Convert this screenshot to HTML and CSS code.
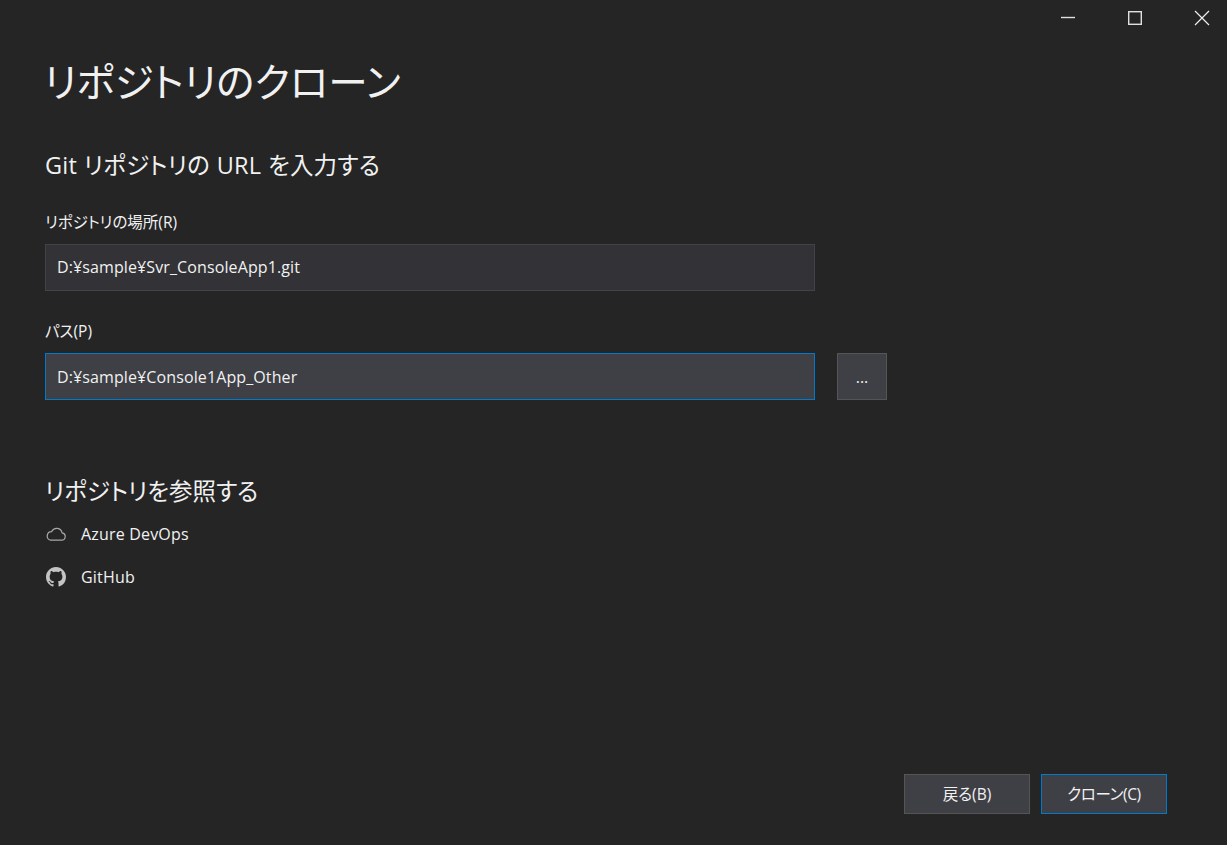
FILE: index.html
```html
<!DOCTYPE html>
<html lang="ja">
<head>
<meta charset="utf-8">
<title>リポジトリのクローン</title>
<link rel="stylesheet" href="styles.css">
</head>
<body>
<div class="window">
  <header class="caption">
    <button class="cap-btn" aria-label="最小化"><svg width="16" height="16" viewBox="0 0 16 16"><path d="M1 7.500h14" stroke="#e0e0e0" stroke-width="1.400" fill="none"/></svg></button>
    <button class="cap-btn" aria-label="最大化"><svg width="16" height="16" viewBox="0 0 16 16"><rect x="1.700" y="1.700" width="12.600" height="12.600" stroke="#e0e0e0" stroke-width="1.400" fill="none"/></svg></button>
    <button class="cap-btn" aria-label="閉じる"><svg width="16" height="16" viewBox="0 0 16 16"><path d="M1 1l14 14M15 1l-14 14" stroke="#f0f0f0" stroke-width="1.200" fill="none"/></svg></button>
  </header>
  <main class="content">
    <h1 class="title">リポジトリのクローン</h1>
    <h2 class="section first">Git リポジトリの URL を入力する</h2>
    <label class="label">リポジトリの場所(R)</label>
    <div class="row">
      <div class="input">D:¥sample¥Svr_ConsoleApp1.git</div>
    </div>
    <label class="label second">パス(P)</label>
    <div class="row">
      <div class="input focused">D:¥sample¥Console1App_Other</div>
      <button class="browse">...</button>
    </div>
    <h2 class="section browse-head">リポジトリを参照する</h2>
    <a class="link">
      <svg class="ico" width="20" height="20" viewBox="0 0 20 20"><path d="M4.500 16.200h11a3.700 3.700 0 0 0 .6-7.350 5.500 5.500 0 0 0-10.400-1.300 4.400 4.400 0 0 0-1.200 8.650z" fill="none" stroke="#a8a8a8" stroke-width="1.200"/></svg>
      <span>Azure DevOps</span>
    </a>
    <a class="link">
      <svg class="ico" width="20" height="20" viewBox="0 0 16 16"><path fill="#c4c4c4" d="M8 0C3.580 0 0 3.580 0 8c0 3.540 2.290 6.530 5.470 7.590.4.070.55-.17.55-.38 0-.19-.01-.82-.01-1.490-2.010.37-2.530-.49-2.690-.94-.09-.23-.48-.94-.82-1.130-.28-.15-.68-.52-.01-.53.630-.01 1.080.58 1.230.82.720 1.210 1.870.87 2.330.66.070-.52.280-.87.510-1.070-1.780-.2-3.640-.89-3.640-3.950 0-.87.310-1.590.820-2.150-.08-.2-.36-1.020.08-2.120 0 0 .67-.21 2.200.82.640-.18 1.320-.27 2-.27s1.360.09 2 .27c1.530-1.040 2.200-.82 2.200-.82.440 1.100.16 1.920.08 2.120.51.560.82 1.270.82 2.150 0 3.070-1.870 3.750-3.650 3.950.29.250.54.730.54 1.480 0 1.070-.01 1.930-.01 2.200 0 .21.150.46.550.38A8.010 8.010 0 0 0 16 8c0-4.420-3.580-8-8-8z"/></svg>
      <span>GitHub</span>
    </a>
  </main>
  <footer class="actions">
    <button class="btn">戻る(B)</button>
    <button class="btn primary">クローン(C)</button>
  </footer>
</div>
</body>
</html>
```
FILE: styles.css
```css
* { box-sizing: border-box; }
html, body { margin: 0; height: 100%; }
body {
  background: #252526;
  color: #f1f1f1;
  font-family: "Open Sans", "Noto Sans CJK JP", sans-serif;
  font-feature-settings: "palt";
  overflow: hidden;
}
.window { width: 1227px; height: 845px; display: flex; flex-direction: column; }
.caption { display: flex; justify-content: flex-end; gap: 51px; padding-right: 17px; height: 36px; flex: none; }
.cap-btn {
  width: 16px; height: 36px; padding: 0; border: 0; background: none;
  display: flex; align-items: center; justify-content: center;
}
.content { flex: 1; padding: 0 45px; display: flex; flex-direction: column; align-items: flex-start; }
.title { margin: 16px 0 0 -1px; font-size: 39.600px; line-height: 60px; font-weight: 400; }
.section { margin: 0; font-size: 23.500px; line-height: 30px; font-weight: 400; }
.section.first { margin-top: 38px; letter-spacing: 0.200px; word-spacing: 0.500px; }
.label { font-size: 15.500px; line-height: 20px; margin-top: 32px; margin-bottom: 12px; }
.label.second { margin-top: 30px; margin-bottom: 12px; }
.row { display: flex; gap: 22px; }
.input {
  width: 770px; height: 47px; padding: 0 11px;
  background: #333337; border: 1px solid #434346;
  font-size: 16px; letter-spacing: 0.110px; line-height: 45px; color: #f1f1f1;
}
.input.focused { background: #3f3f46; border-color: #007acc; line-height: 47px; }
.browse, .btn {
  background: #3f3f46; border: 1px solid #555555; color: #f1f1f1;
  font-family: inherit; font-feature-settings: inherit; padding: 0;
}
.browse { width: 50px; height: 47px; font-size: 16px; }
.browse-head { margin-top: 76px; }
.link { display: flex; align-items: center; gap: 26px; margin-top: 12px; height: 31px; font-size: 16px; letter-spacing: 0.180px; color: #f1f1f1; }
.link + .link { margin-top: 12px; }
.ico { flex: none; margin-left: 1px; width: 20px; margin-right: -11px; }
.actions { display: flex; justify-content: flex-end; gap: 11px; padding: 0 60px 31px; flex: none; }
.btn { width: 126px; height: 40px; font-size: 15.500px; line-height: 36px; }
.btn.primary { border-color: #007acc; letter-spacing: -0.400px; }
```
